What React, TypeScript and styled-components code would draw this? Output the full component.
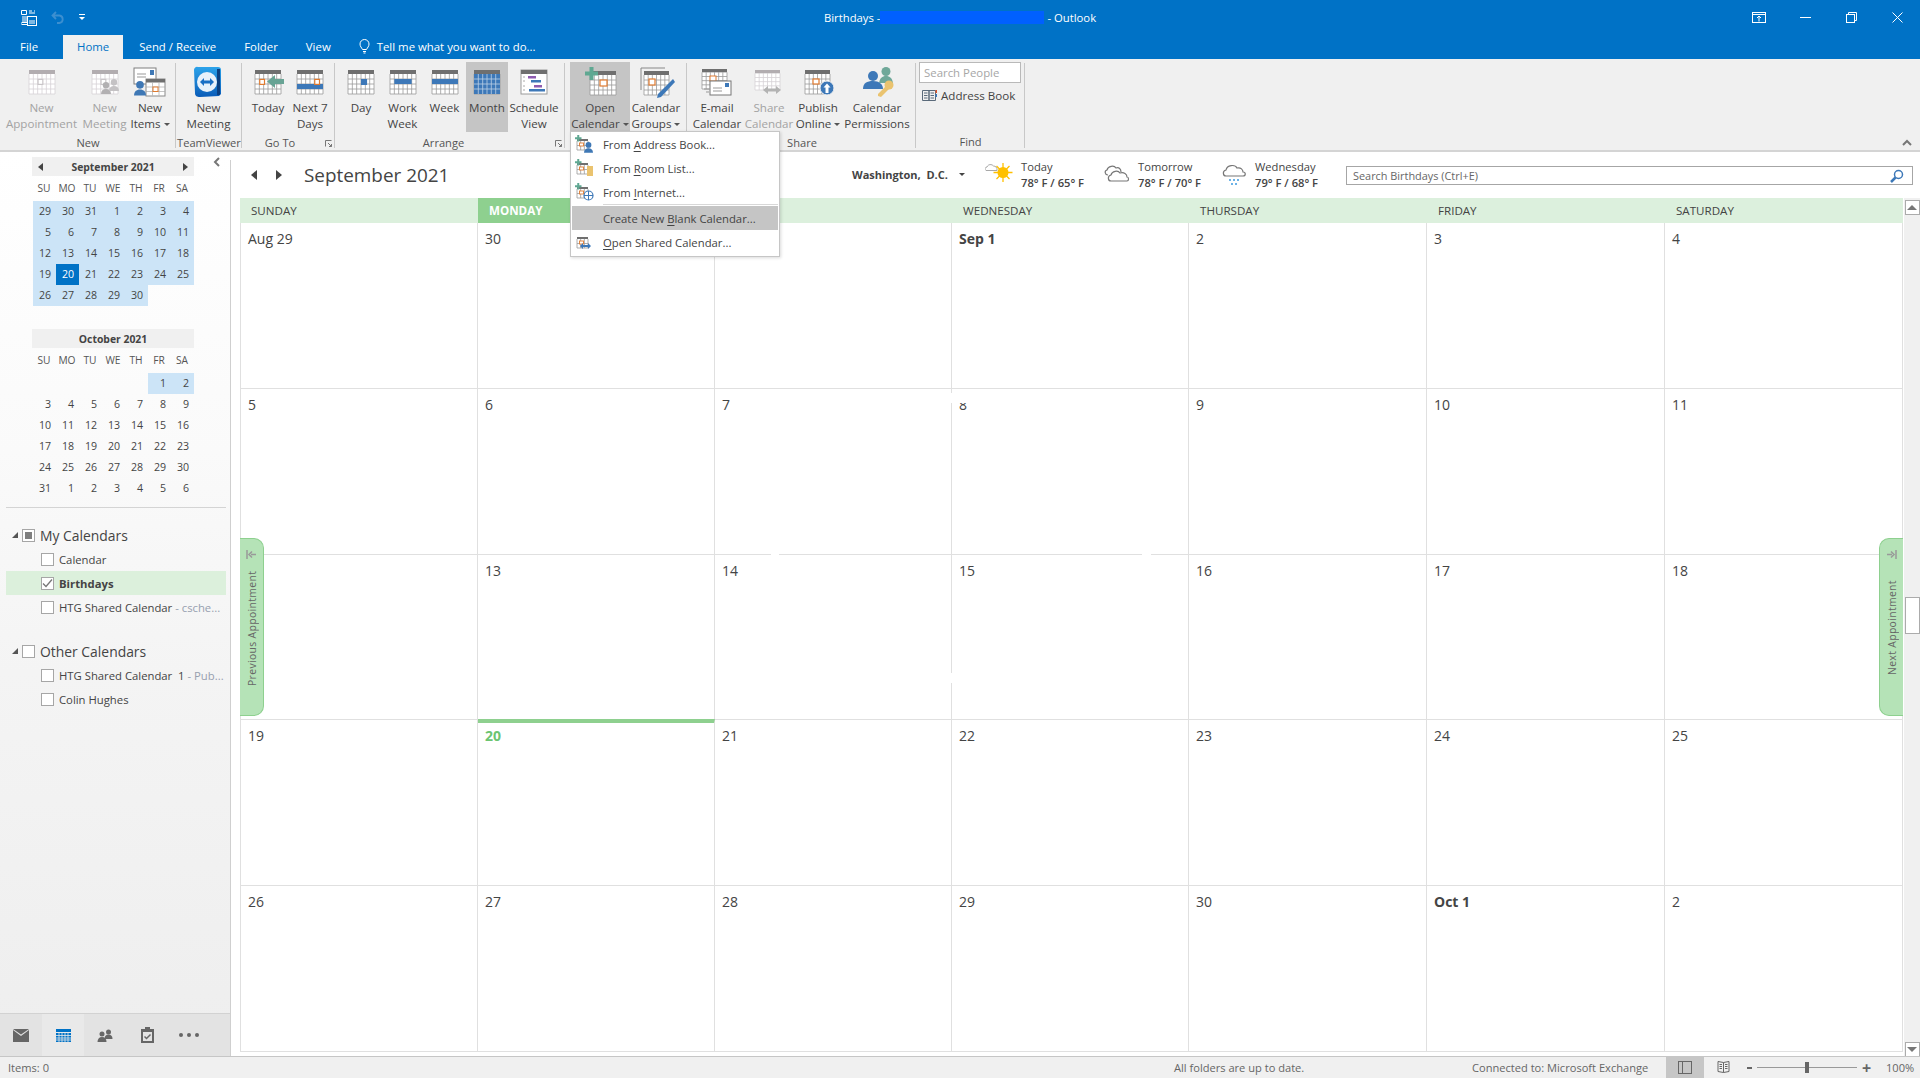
import React from 'react';
import styled, { createGlobalStyle } from 'styled-components';

const Global = createGlobalStyle`
  html, body { margin: 0; padding: 0; background: #fff; }
  * { box-sizing: border-box; }
  #root { font-family: "Open Sans", "Noto Sans", "Liberation Sans", sans-serif; color: #444; }
`;

const Page = styled.div`width:1920px;height:1078px;display:flex;flex-direction:column;overflow:hidden;background:#fff;`;

/* ---------- title bar ---------- */
const TitleBar = styled.div`height:35px;background:#0072c6;color:#fff;display:grid;grid-template-columns:1fr auto 1fr;align-items:center;padding-bottom:1px;`;
const Qat = styled.div`display:flex;align-items:center;padding-left:20px;gap:14px;`;
const TitleText = styled.div`font-size:11.3px;display:flex;align-items:center;gap:0;white-space:pre;`;
const Redact = styled.span`display:inline-block;width:164px;height:13px;background:#0060ff;`;
const WinButtons = styled.div`display:flex;justify-content:flex-end;`;
const WinBtn = styled.div`width:46px;height:30px;display:flex;align-items:center;justify-content:center;`;

/* ---------- tabs ---------- */
const TabRow = styled.div`height:24px;background:#0072c6;display:flex;padding-left:6px;align-items:stretch;`;
const Tab = styled.div<{ $active?: boolean; $file?: boolean }>`
  padding:0 14px 2px;font-size:11.4px;display:flex;align-items:center;margin-right:${p => (p.$file ? '11px' : p.$active ? '2px' : '0')};
  color:${p => (p.$active ? '#0072c6' : '#fff')};background:${p => (p.$active ? '#f0f0f0' : 'transparent')};
`;
const TellMe = styled.div`display:flex;align-items:center;gap:7px;color:#fff;font-size:11.4px;margin-left:14px;padding-bottom:2px;`;

/* ---------- ribbon ---------- */
const Ribbon = styled.div`height:93px;background:#f0f0f0;border-bottom:2px solid #d4d4d4;display:flex;padding-top:3px;position:relative;`;
const Group = styled.div<{ $w: number; $pl?: number }>`
  width:${p => p.$w}px;padding-left:${p => p.$pl ?? 0}px;position:relative;display:flex;flex-direction:column;flex:none;
  &::after{content:"";position:absolute;right:0;top:1px;height:85px;width:1px;background:#c8c8c8;}
`;
const Buttons = styled.div`display:flex;height:70px;`;
const RBtn = styled.div<{ $w: number; $on?: boolean; $off?: boolean }>`
  width:${p => p.$w}px;height:70px;flex:none;display:flex;flex-direction:column;align-items:center;padding-top:5px;position:relative;
  background:${p => (p.$on ? '#c5c5c5' : 'transparent')};color:${p => (p.$off ? '#a3a3a3' : '#444')};
`;
const IconBox = styled.svg`width:40px;height:30px;flex:none;overflow:visible;`;
const RLabel = styled.div`margin-top:3px;font-size:11.6px;line-height:16px;text-align:center;white-space:nowrap;`;
const Caret = styled.span`display:inline-block;margin-left:3px;vertical-align:middle;border-left:3px solid transparent;border-right:3px solid transparent;border-top:3px solid #555;`;
const Foot = styled.div<{ $launch?: boolean }>`height:16px;margin-top:3px;font-size:11.1px;line-height:16px;text-align:center;color:#555;padding-right:${p => (p.$launch ? '18px' : '0')};white-space:nowrap;`;
const Launcher = styled.svg`position:absolute;right:3px;bottom:3px;width:7px;height:7px;`;
const FindBody = styled.div`height:70px;padding-left:3px;display:flex;flex-direction:column;`;
const PeopleBox = styled.div`width:102px;height:21px;border:1px solid #b9b9b9;background:#fff;color:#a6a6a6;font-size:11.4px;line-height:19px;padding-left:4px;`;
const AddrRow = styled.div`display:flex;align-items:center;gap:4px;margin-top:3px;height:18px;padding-left:3px;font-size:11.6px;white-space:nowrap;`;
const Collapse = styled.svg`position:absolute;right:8px;bottom:4px;width:10px;height:7px;`;

/* ---------- dropdown ---------- */
const Menu = styled.div`position:absolute;left:0;top:69px;width:210px;height:126px;background:#fff;border:1px solid #c6c6c6;box-shadow:1px 1px 3px rgba(0,0,0,.15);padding:0 1px 1px;z-index:20;`;
const MItem = styled.div<{ $on?: boolean }>`height:24px;display:flex;align-items:center;padding-left:3px;gap:9px;font-size:11.3px;color:#444;white-space:nowrap;background:${p => (p.$on ? '#c5c5c5' : 'transparent')};`;
const MIconSlot = styled.svg`width:19px;height:18px;flex:none;`;
const MSep = styled.div`height:1px;margin:0 0 1px 31px;background:#d8d8d8;`;
const Mn = styled.span`text-decoration:underline;text-underline-offset:2px;`;

/* ---------- body ---------- */
const Body = styled.div`flex:1;display:flex;min-height:0;`;
const Sidebar = styled.div`
  width:231px;flex:none;display:flex;flex-direction:column;padding-top:5px;position:relative;background:linear-gradient(#fff 0,#fafafa 300px,#f4f4f4 520px,#eeeeee 100%);
  &::after{content:"";position:absolute;right:0;top:8px;bottom:0;width:1px;background:#cfcfcf;}
`;
const CollapseBtn = styled.svg`position:absolute;left:213px;top:5px;width:7px;height:10px;`;
const Mini = styled.div`margin-left:32px;width:162px;`;
const MiniHead = styled.div`height:19px;background:#f0f0f0;display:flex;align-items:center;justify-content:space-between;padding:0 6px;font-size:10.4px;font-weight:700;color:#444;`;
const MiniArrow = styled.span<{ $right?: boolean; $hide?: boolean }>`width:0;height:0;border-top:4px solid transparent;border-bottom:4px solid transparent;${p => (p.$right ? 'border-left:5px solid #444;' : 'border-right:5px solid #444;')}visibility:${p => (p.$hide ? 'hidden' : 'visible')};`;
const MiniGrid = styled.div`display:grid;grid-template-columns:repeat(7,23px);margin-left:1px;`;
const MiniDow = styled.div`height:25px;line-height:25px;text-align:center;font-size:10.2px;color:#555;padding-right:1px;`;
const MiniDay = styled.div<{ $sel?: boolean; $today?: boolean }>`
  height:21px;line-height:21px;text-align:right;padding-right:5px;font-size:10.6px;
  background:${p => (p.$today ? '#0072c6' : p.$sel ? '#cce4f7' : 'transparent')};color:${p => (p.$today ? '#fff' : '#444')};
`;
const MiniGap = styled.div`height:23px;`;
const SideRule = styled.div`height:1px;margin:8px 5px 15px 6px;background:#d4d4d4;flex:none;`;
const TreeHead = styled.div`height:24px;display:flex;align-items:center;padding-left:12px;font-size:13.9px;color:#444;`;
const Tri = styled.span`width:0;height:0;border-left:6px solid transparent;border-bottom:6px solid #555;margin-right:4px;`;
const Check = styled.span<{ $mark?: boolean }>`width:13px;height:13px;flex:none;border:1px solid #a6a6a6;background:#fff;display:flex;align-items:center;justify-content:center;margin-right:5px;`;
const CheckFill = styled.span`width:7px;height:7px;background:#7f7f7f;`;
const TreeRow = styled.div<{ $on?: boolean }>`height:24px;margin:0 5px 0 6px;padding-left:35px;display:flex;align-items:center;white-space:nowrap;font-size:11.3px;font-weight:${p => (p.$on ? 700 : 400)};background:${p => (p.$on ? '#dcf0dc' : 'transparent')};color:#444;`;
const Sub = styled.span`color:#97a0af;white-space:pre;`;
const TreeGap = styled.div`height:20px;`;
const Spacer = styled.div`flex:1;`;
const NavBar = styled.div`height:43px;border-top:1px solid #d2d2d2;background:#e3e3e3;display:flex;margin-right:1px;`;
const NavCell = styled.div<{ $on?: boolean }>`width:42px;display:flex;align-items:center;justify-content:center;background:${p => (p.$on ? '#e9e9e9' : 'transparent')};`;

/* ---------- calendar ---------- */
const Content = styled.div`flex:1;display:flex;flex-direction:column;min-width:0;`;
const CalHead = styled.div`height:46px;flex:none;display:flex;align-items:center;padding-left:20px;`;
const NavArrow = styled.span<{ $right?: boolean }>`width:0;height:0;margin-right:19px;border-top:5px solid transparent;border-bottom:5px solid transparent;${p => (p.$right ? 'border-left:6px solid #444;' : 'border-right:6px solid #444;')}`;
const MonthTitle = styled.div`flex:1;font-size:18.9px;color:#444;margin-left:3px;`;
const Location = styled.div`width:133px;font-size:11px;font-weight:700;color:#444;display:flex;align-items:center;gap:11px;white-space:pre;margin-bottom:2px;`;
const LocCaret = styled.span`border-left:3px solid transparent;border-right:3px solid transparent;border-top:3px solid #444;`;
const Weather = styled.div<{ $w: number }>`width:${p => p.$w}px;display:flex;align-items:center;flex:none;`;
const WxIcon = styled.svg<{ $w: number }>`width:${p => p.$w}px;height:30px;flex:none;`;
const WxText = styled.div`font-size:11.2px;line-height:16px;color:#444;white-space:nowrap;`;
const WxTemp = styled.div`font-weight:600;`;
const SearchBox = styled.div`width:567px;height:19px;margin:1px 7px 0 0;border:1px solid #a6a6a6;display:flex;align-items:center;justify-content:space-between;padding:0 8px 0 6px;font-size:10.9px;color:#666;flex:none;`;
const CalMain = styled.div`flex:1;display:flex;min-height:0;padding-left:9px;`;
const CalWrap = styled.div`width:1663px;height:854px;display:flex;flex-direction:column;position:relative;flex:none;`;
const DayHead = styled.div`height:25px;display:grid;grid-template-columns:238px 237px 237px 237px 238px 238px 238px;background:#dcf0dd;flex:none;`;
const DayName = styled.div<{ $on?: boolean }>`padding-left:11px;line-height:25px;font-size:11.6px;color:${p => (p.$on ? '#fff' : '#444')};font-weight:${p => (p.$on ? 700 : 400)};background:${p => (p.$on ? '#8ed08f' : 'transparent')};`;
const Grid = styled.div`flex:1;display:grid;grid-template-columns:237px 237px 237px 237px 238px 238px 238px;grid-template-rows:repeat(5,1fr);border-left:1px solid #e0e0e0;`;
const Cell = styled.div<{ $today?: boolean }>`border-right:1px solid #e0e0e0;border-bottom:1px solid #e0e0e0;padding:${p => (p.$today ? '1px' : '4px')} 0 0 7px;${p => (p.$today ? 'border-top:4px solid #8ed08f;margin-top:-1px;' : '')}`;
const CellDate = styled.span<{ $bold?: boolean; $today?: boolean }>`font-size:14px;line-height:18px;font-weight:${p => (p.$bold || p.$today ? 700 : 400)};color:${p => (p.$today ? '#6cc471' : '#444')};`;
const ApptTab = styled.div<{ $next?: boolean }>`
  position:absolute;top:340px;height:178px;width:24px;${p => (p.$next ? 'right:0;' : 'left:0;')}
  background:#b5e3b7;border:1px solid #8ed08f;border-${p => (p.$next ? 'right' : 'left')}:none;
  border-radius:${p => (p.$next ? '10px 0 0 10px' : '0 10px 10px 0')};display:flex;flex-direction:column;align-items:center;z-index:5;
`;
const ApptArrow = styled.svg`width:11px;height:9px;margin-top:11px;flex:none;`;
const ApptText = styled.div`flex:1;display:flex;align-items:center;justify-content:center;writing-mode:vertical-rl;transform:rotate(180deg);font-size:10.4px;letter-spacing:.35px;color:#666;white-space:nowrap;padding-top:18px;`;
const Erase = styled.div<{ $l: number; $t: number; $w: number; $h: number }>`position:absolute;left:${p => p.$l}px;top:${p => p.$t}px;width:${p => p.$w}px;height:${p => p.$h}px;background:#fff;z-index:3;`;
const ScrollBar = styled.div`width:16px;margin-left:1px;flex:none;height:859px;background:#f0f0f0;display:flex;flex-direction:column;align-items:center;padding-top:2px;`;
const ScrollBtn = styled.div`width:15px;height:15px;background:#fff;border:1px solid #ababab;display:flex;align-items:center;justify-content:center;flex:none;`;
const ScrollThumb = styled.div`width:15px;height:37px;background:#fff;border:1px solid #ababab;margin-top:382px;margin-bottom:auto;flex:none;`;
const ScrollTri = styled.span<{ $down?: boolean }>`border-left:5px solid transparent;border-right:5px solid transparent;${p => (p.$down ? 'border-top:5px solid #777;' : 'border-bottom:5px solid #777;')}`;

/* ---------- status ---------- */
const Status = styled.div`height:22px;flex:none;background:#f0f0f0;border-top:1px solid #c6c6c6;display:flex;align-items:stretch;font-size:11.1px;color:#666;position:relative;z-index:2;`;
const StatusText = styled.div<{ $pl?: number; $w?: number }>`padding-left:${p => p.$pl ?? 0}px;${p => (p.$w ? `width:${p.$w}px;` : '')}display:flex;align-items:center;white-space:nowrap;flex:none;`;
const ViewBtn = styled.div<{ $on?: boolean }>`width:38px;flex:none;display:flex;align-items:center;justify-content:center;background:${p => (p.$on ? '#c6c6c6' : 'transparent')};`;
const Zoom = styled.div`display:flex;align-items:center;margin-left:5px;width:139px;flex:none;`;
const ZoomMark = styled.span`width:5px;height:2px;background:#666;flex:none;`;
const ZoomTrack = styled.div`width:100px;height:1px;background:#999;margin:0 5px;position:relative;flex:none;`;
const ZoomThumb = styled.span`position:absolute;left:48px;top:-5px;width:4px;height:11px;background:#666;`;
const ZoomPlus = styled.span`font-size:16px;line-height:16px;color:#666;font-weight:700;`;

/* ---------- icon parts ---------- */
const CX = 7, CY = 3, CW = 26, CH = 24, CT = 4, COLS = 6, ROWS = 4;
const cw = CW / COLS, ch = (CH - CT) / ROWS;

function Cal({ x = CX, y = CY, w = CW, h = CH, head = '#6f6f6f', line = '#9a9a9a', cols = COLS, rows = ROWS }: { x?: number; y?: number; w?: number; h?: number; head?: string; line?: string; cols?: number; rows?: number }) {
  const t = Math.max(2, h / 6);
  const lines: React.ReactNode[] = [];
  for (let i = 0; i <= cols; i++) { const lx = x + (i * w) / cols; lines.push(<line key={'v' + i} x1={lx} x2={lx} y1={y + t} y2={y + h} stroke={line} strokeWidth=".8" />); }
  for (let j = 1; j <= rows; j++) { const ly = y + t + (j * (h - t)) / rows; lines.push(<line key={'h' + j} x1={x} x2={x + w} y1={ly} y2={ly} stroke={line} strokeWidth=".8" />); }
  return <g><rect x={x} y={y} width={w} height={h} fill="#fff" />{lines}<rect x={x} y={y} width={w} height={t} fill={head} /></g>;
}
const Fill = ({ c, r, n = 1, m = 1, f = '#3d78b8' }: { c: number; r: number; n?: number; m?: number; f?: string }) => <rect x={CX + c * cw} y={CY + CT + r * ch} width={n * cw} height={m * ch} fill={f} />;
const Orange = ({ c = 2, r = 1, s = '#e07b30' }: { c?: number; r?: number; s?: string }) => <rect x={CX + c * cw + .4} y={CY + CT + r * ch + .4} width={cw * 1.1} height={ch} fill="#fff" stroke={s} strokeWidth="1.2" />;
const Person = ({ x, y, s = 1, f = '#3f78b5' }: { x: number; y: number; s?: number; f?: string }) => <g transform={`translate(${x} ${y}) scale(${s})`} fill={f}><circle cx="5" cy="3.2" r="3.2" /><path d="M0 12c0-3.2 2-5 5-5s5 1.8 5 5z" /></g>;
const PlusG = ({ x = 0, y = 0, s = 1 }: { x?: number; y?: number; s?: number }) => <path transform={`translate(${x} ${y}) scale(${s})`} d="M4.5 0h4v4.5H13v4H8.5V13h-4V8.5H0v-4h4.5z" fill="#5fa892" />;

function RI({ name }: { name: string }) {
  const off = { head: '#b2adb0', line: '#d6d2d5' };
  let c: React.ReactNode = null;
  switch (name) {
    case 'appt': c = <><Cal {...off} /><Orange s="#c9c5c8" /></>; break;
    case 'meet': c = <><Cal {...off} /><Orange s="#c9c5c8" /><Person x={16} y={15} s={1} f="#b2b0b2" /><Person x={24} y={12} s={1} f="#c4c2c4" /></>; break;
    case 'items': c = <><rect x="4" y="1" width="22" height="16" fill="#fff" stroke="#7f7f7f" /><rect x="20" y="3" width="4" height="5" fill="#3f78b5" /><path d="M7 7h9M7 10h9" stroke="#999" /><rect x="16" y="12" width="19" height="17" fill="#fff" stroke="#8a8a8a" /><rect x="16" y="12" width="19" height="3.5" fill="#6f6f6f" /><path d="M22.5 15.5v13M29 15.5v13M16 20h19M16 24.500h19" stroke="#aaa" strokeWidth=".7" /><rect x="23" y="20" width="5" height="4.500" fill="#fff" stroke="#e07b30" /><Person x={4} y={14} s={1.2} /></>; break;
    case 'tv': c = <><defs><linearGradient id="tvg" x1="0" y1="0" x2="0" y2="1"><stop offset="0" stopColor="#2ca3ea" /><stop offset="1" stopColor="#0a5cb8" /></linearGradient></defs><path d="M9 0h20a3 3 0 0 1 3 3v24l-2 2-19 1c-3 0-5-1-5-4l-1-23a3 3 0 0 1 4-3z" fill="url(#tvg)" /><rect x="28" y="2" width="3" height="26" fill="#0b3f80" /><circle cx="18" cy="15" r="10" fill="#e8f1fa" /><path d="M11 15l4-4v2.500h6V11l4 4-4 4v-2.500h-6V19z" fill="#1a6fc4" /></>; break;
    case 'today': c = <><Cal /><Orange c={1} r={1} /><path d="M36 12h-9V8l-8 6.500 8 6.500v-4h9z" fill="#68a394" /></>; break;
    case 'next': c = <><Cal /><Fill c={0} r={2} n={6} /><Orange c={4} r={1} /></>; break;
    case 'day': c = <><Cal /><Fill c={3} r={1} n={1.4} m={1.2} /></>; break;
    case 'work': c = <><Cal /><Fill c={1} r={1} n={4} /></>; break;
    case 'week': c = <><Cal /><Fill c={0} r={1} n={6} /></>; break;
    case 'month': c = <><Cal /><Fill c={0} r={0} n={6} m={4} f="#3d78b8" /><path d="M11.300 7v20M15.700 7v20M20 7v20M24.300 7v20M28.700 7v20M7 12h26M7 17h26M7 22h26" stroke="#bcd0e6" strokeWidth=".8" /></>; break;
    case 'sched': c = <><rect x="7" y="3" width="26" height="24" fill="#fff" stroke="#9a9a9a" /><rect x="7" y="3" width="26" height="4" fill="#6f6f6f" /><rect x="14" y="9" width="8" height="2.500" fill="#8e5bb0" /><rect x="17" y="13" width="10" height="2.500" fill="#3d78b8" /><rect x="20" y="18" width="8" height="2.500" fill="#8e5bb0" /><rect x="15" y="22" width="16" height="2.500" fill="#3d78b8" /><path d="M9 10h2M9 14h2M9 19h2M9 23h2" stroke="#aaa" /></>; break;
    case 'open': c = <><Cal x={10} y={4} w={26} h={24} /><rect x={20} y={13} width={7} height={6} fill="#fff" stroke="#e07b30" strokeWidth="1.2" /><PlusG x={5} y={0} /></>; break;
    case 'groups': c = <><path d="M5 1h24" stroke="#888" /><path d="M5 1v22" stroke="#888" /><Cal x={8} y={4} w={25} h={24} /><rect x={13} y={12} width={6} height={6} fill="#fff" stroke="#e07b30" strokeWidth="1.2" /><path d="M37 12l2 3-14 15-4 1 1-4z" fill="#3d78b8" /></>; break;
    case 'mail': c = <><Cal x={5} y={2} w={25} h={20} /><rect x={13} y={9} width={6} height={5} fill="#fff" stroke="#e07b30" /><rect x="13" y="14" width="21" height="14" fill="#fff" stroke="#777" /><rect x="28" y="16" width="4" height="4" fill="#3d78b8" /><path d="M16 21h9M16 24h9" stroke="#999" /><path d="M7 22h5M9 25h3" stroke="#999" /></>; break;
    case 'share': c = <><Cal {...off} x={6} y={3} h={20} w={25} /><path d="M14 23l5-4v2.500h8V19l5 4-5 4v-2.500h-8V27z" fill="#b3b3b3" /></>; break;
    case 'pub': c = <><Cal x={7} y={3} w={25} h={24} /><rect x={15} y={12} width={6} height={5} fill="#fff" stroke="#e07b30" strokeWidth="1.2" /><circle cx="29" cy="21" r="7" fill="#3d78b8" stroke="#f0f0f0" /><path d="M29 16.500l3.500 4h-2V26h-3v-5.500h-2z" fill="#fff" /></>; break;
    case 'perm': c = <><circle cx="29" cy="4.500" r="4.500" fill="#6fa899" /><path d="M22 16c1-5 3-7 7-7s6 2 7 7z" fill="#6fa899" /><circle cx="16" cy="9" r="5" fill="#3d78b8" /><path d="M6 22c0-6 4-8 10-8s10 3 10 8z" fill="#3d78b8" /><g fill="#eac36f"><circle cx="32" cy="18" r="4.500" /><path d="M29 19l3 3-8 8-3-1v-2z" /></g></>; break;
  }
  return <IconBox viewBox="0 0 40 30">{c}</IconBox>;
}

function MI({ name }: { name: string }) {
  const small = <><Cal x={2} y={4} w={11} h={11} cols={3} rows={2} head="#6f6f6f" /><rect x="4.500" y="8" width="4" height="3" fill="#fff" stroke="#e07b30" strokeWidth=".9" /></>;
  let o: React.ReactNode = null;
  if (name === 'addr') o = <><PlusG x={0} y={0} s={.5} /><Person x={9} y={7} s={.9} /></>;
  if (name === 'room') o = <><PlusG x={0} y={0} s={.5} /><rect x="12" y="7" width="6" height="10" fill="#eac36f" /></>;
  if (name === 'net') o = <><PlusG x={0} y={0} s={.5} /><circle cx="13.500" cy="12.500" r="4.500" fill="#fff" stroke="#3d78b8" strokeWidth="1.200" /><path d="M9 12.500h9M13.500 8v9" stroke="#3d78b8" /></>;
  if (name === 'shared') o = <path d="M5 13l3-3v2h5v-2l3 3-3 3v-2H8v2z" fill="#3d78b8" />;
  return <MIconSlot viewBox="0 0 19 18">{name === 'blank' ? null : small}{o}</MIconSlot>;
}

const Launch = () => <Launcher viewBox="0 0 7 7"><path d="M.5 6.500V.5h6M3 3l3.500 3.500M6.500 4v2.500H4" fill="none" stroke="#777" /></Launcher>;

const SunCloud = () => <WxIcon $w={36} viewBox="0 0 36 30"><g stroke="#ffc000" strokeWidth="1.300"><path d="M18 3v19M8.500 12.500h19M11.500 6l13 13M24.500 6l-13 13" /></g><circle cx="18" cy="12.500" r="5.500" fill="#ffc000" /><path d="M1 10.500c-1.500-1-1-3.500 1-3.500 1-3 5-3 6.500-1 2 0 4 1.500 3.500 4.500z" fill="#fff" stroke="#a8a8a8" /></WxIcon>;
const Clouds = () => <WxIcon $w={35} viewBox="0 0 35 30"><path d="M5 15c-3 0-4-4-1-5 1-4 7-5 9-2 3-1 5 1 5 4" fill="#fff" stroke="#777" strokeWidth="1.200" /><path d="M8 21c-3 0-4-5 0-6 1-4 7-5 9-2 4-1 7 1 7 4 2 0 2 4 0 4z" fill="#fff" stroke="#777" strokeWidth="1.200" /></WxIcon>;
const Rain = () => <WxIcon $w={33} viewBox="0 0 33 30"><path d="M4 16c-3 0-4-5 0-6 1-5 9-6 11-2 4-1 6 2 6 4 3 0 3 4 0 4z" fill="#fff" stroke="#777" strokeWidth="1.200" /><path d="M8 19v2M12 19v2M16 19v2M10 23v2M14 23v2" stroke="#3d9be0" strokeWidth="1.500" /></WxIcon>;

/* ---------- data ---------- */
const DOW = ['SU', 'MO', 'TU', 'WE', 'TH', 'FR', 'SA'];
const SEP = ['29', '30', '31', '1', '2', '3', '4', '5', '6', '7', '8', '9', '10', '11', '12', '13', '14', '15', '16', '17', '18', '19', '20', '21', '22', '23', '24', '25', '26', '27', '28', '29', '30'];
const OCT = ['', '', '', '', '', '1', '2', '3', '4', '5', '6', '7', '8', '9', '10', '11', '12', '13', '14', '15', '16', '17', '18', '19', '20', '21', '22', '23', '24', '25', '26', '27', '28', '29', '30', '31', '1', '2', '3', '4', '5', '6'];
const DAYS = ['SUNDAY', 'MONDAY', 'TUESDAY', 'WEDNESDAY', 'THURSDAY', 'FRIDAY', 'SATURDAY'];
const CELLS = ['Aug 29', '30', '31', 'Sep 1', '2', '3', '4', '5', '6', '7', '8', '9', '10', '11', '12', '13', '14', '15', '16', '17', '18', '19', '20', '21', '22', '23', '24', '25', '26', '27', '28', '29', '30', 'Oct 1', '2'];

export default function App() {
  return (
    <Page>
      <Global />
      <TitleBar>
        <Qat>
          <svg width="17" height="17" viewBox="0 0 17 17" fill="none" stroke="#fff"><path d="M1.500 1.500h5v4h-5zM2 8h5M2 10h5M2 12h5M9 2h3M9 4h6M14 2h1" /><rect x="7.500" y="7.500" width="9" height="9" /><path d="M9 12h6M9 14h6" /><rect x="2" y="13.500" width="5" height="2" /></svg>
          <svg width="14" height="13" viewBox="0 0 14 13" fill="none" stroke="#3c8fd0" strokeWidth="1.800"><path d="M5 1L1.500 4.500 5 8M2 4.500h6.500a3.800 3.800 0 0 1 0 7.500H6" /></svg>
          <svg width="6" height="6" viewBox="0 0 6 6" fill="#fff"><rect width="6" height="1" /><path d="M0 3h6L3 6z" /></svg>
        </Qat>
        <TitleText>Birthdays -<Redact /> - Outlook</TitleText>
        <WinButtons>
          <WinBtn><svg width="14" height="11" viewBox="0 0 14 11" fill="none" stroke="#fff"><rect x=".5" y=".5" width="13" height="10" /><path d="M1 2.500h12M7 9.500V4M5 6l2-2 2 2" /></svg></WinBtn>
          <WinBtn><svg width="11" height="1" viewBox="0 0 11 1"><rect width="11" height="1" fill="#fff" /></svg></WinBtn>
          <WinBtn><svg width="11" height="11" viewBox="0 0 11 11" fill="none" stroke="#fff"><rect x=".5" y="2.500" width="8" height="8" /><path d="M2.500 2.500v-2h8v8h-2" /></svg></WinBtn>
          <WinBtn><svg width="11" height="11" viewBox="0 0 11 11" stroke="#fff"><path d="M.5.500l10 10M10.500.500l-10 10" /></svg></WinBtn>
        </WinButtons>
      </TitleBar>
      <TabRow>
        <Tab $file>File</Tab>
        <Tab $active>Home</Tab>
        <Tab>Send / Receive</Tab>
        <Tab>Folder</Tab>
        <Tab>View</Tab>
        <TellMe>
          <svg width="11" height="15" viewBox="0 0 11 15" fill="none" stroke="#fff"><path d="M3.500 10.500C2.500 8.500 1 7.500 1 5a4.500 4.500 0 0 1 9 0c0 2.500-1.500 3.500-2.500 5.500zM4 12.500h3M4.500 14h2" /></svg>
          Tell me what you want to do...
        </TellMe>
      </TabRow>
      <Ribbon>
        <Group $w={176}>
          <Buttons>
            <RBtn $w={83} $off><RI name="appt" /><RLabel>New<br />Appointment</RLabel></RBtn>
            <RBtn $w={43} $off><RI name="meet" /><RLabel>New<br />Meeting</RLabel></RBtn>
            <RBtn $w={48}><RI name="items" /><RLabel>New<br />Items<Caret /></RLabel></RBtn>
          </Buttons>
          <Foot>New</Foot>
        </Group>
        <Group $w={66}>
          <Buttons><RBtn $w={65}><RI name="tv" /><RLabel>New<br />Meeting</RLabel></RBtn></Buttons>
          <Foot>TeamViewer</Foot>
        </Group>
        <Group $w={93} $pl={1}>
          <Buttons>
            <RBtn $w={50}><RI name="today" /><RLabel>Today</RLabel></RBtn>
            <RBtn $w={34}><RI name="next" /><RLabel>Next 7<br />Days</RLabel></RBtn>
          </Buttons>
          <Foot $launch>Go To</Foot>
          <Launch />
        </Group>
        <Group $w={230} $pl={5}>
          <Buttons>
            <RBtn $w={42}><RI name="day" /><RLabel>Day</RLabel></RBtn>
            <RBtn $w={41}><RI name="work" /><RLabel>Work<br />Week</RLabel></RBtn>
            <RBtn $w={43}><RI name="week" /><RLabel>Week</RLabel></RBtn>
            <RBtn $w={42} $on><RI name="month" /><RLabel>Month</RLabel></RBtn>
            <RBtn $w={52}><RI name="sched" /><RLabel>Schedule<br />View</RLabel></RBtn>
          </Buttons>
          <Foot $launch>Arrange</Foot>
          <Launch />
        </Group>
        <Group $w={122} $pl={5}>
          <Buttons>
            <RBtn $w={60} $on>
              <RI name="open" /><RLabel>Open<br />Calendar<Caret /></RLabel>
              <Menu>
                <MItem><MI name="addr" /><span>From <Mn>A</Mn>ddress Book...</span></MItem>
                <MItem><MI name="room" /><span>From <Mn>R</Mn>oom List...</span></MItem>
                <MItem><MI name="net" /><span>From <Mn>I</Mn>nternet...</span></MItem>
                <MSep />
                <MItem $on><MI name="blank" /><span>Create New <Mn>B</Mn>lank Calendar...</span></MItem>
                <MItem><MI name="shared" /><span><Mn>O</Mn>pen Shared Calendar...</span></MItem>
              </Menu>
            </RBtn>
            <RBtn $w={52}><RI name="groups" /><RLabel>Calendar<br />Groups<Caret /></RLabel></RBtn>
          </Buttons>
        </Group>
        <Group $w={229} $pl={1}>
          <Buttons>
            <RBtn $w={58}><RI name="mail" /><RLabel>E-mail<br />Calendar</RLabel></RBtn>
            <RBtn $w={46} $off><RI name="share" /><RLabel>Share<br />Calendar</RLabel></RBtn>
            <RBtn $w={52}><RI name="pub" /><RLabel>Publish<br />Online<Caret /></RLabel></RBtn>
            <RBtn $w={66}><RI name="perm" /><RLabel>Calendar<br />Permissions</RLabel></RBtn>
          </Buttons>
          <Foot>Share</Foot>
        </Group>
        <Group $w={109}>
          <FindBody>
            <PeopleBox>Search People</PeopleBox>
            <AddrRow>
              <svg width="15" height="13" viewBox="0 0 15 13" fill="none" stroke="#5a6a7a"><path d="M.5 1.500h6.500v10H.5zM7 1.500h6.500v10H7zM2 4h3.500M2 6.500h3.500M2 9h3.500M8.500 4H12M8.500 6.500H12M8.500 9H12" /><rect x="13.500" y="1" width="1.500" height="3" fill="#d9542c" stroke="none" /><rect x="13.500" y="5" width="1.500" height="3" fill="#3d78b8" stroke="none" /></svg>
              Address Book
            </AddrRow>
          </FindBody>
          <Foot>Find</Foot>
        </Group>
        <Collapse viewBox="0 0 10 7"><path d="M1 6l4-4 4 4" fill="none" stroke="#777" strokeWidth="2" /></Collapse>
      </Ribbon>
      <Body>
        <Sidebar>
          <CollapseBtn viewBox="0 0 7 10"><path d="M6 1L2 5l4 4" fill="none" stroke="#777" strokeWidth="2" /></CollapseBtn>
          <Mini>
            <MiniHead><MiniArrow />September 2021<MiniArrow $right /></MiniHead>
            <MiniGrid>
              {DOW.map(d => <MiniDow key={d}>{d}</MiniDow>)}
              {SEP.map((d, i) => <MiniDay key={i} $sel $today={i === 22}>{d}</MiniDay>)}
            </MiniGrid>
          </Mini>
          <MiniGap />
          <Mini>
            <MiniHead><MiniArrow $hide />October 2021<MiniArrow $right $hide /></MiniHead>
            <MiniGrid>
              {DOW.map(d => <MiniDow key={d}>{d}</MiniDow>)}
              {OCT.map((d, i) => <MiniDay key={i} $sel={i === 5 || i === 6}>{d}</MiniDay>)}
            </MiniGrid>
          </Mini>
          <SideRule />
          <TreeHead><Tri /><Check><CheckFill /></Check>My Calendars</TreeHead>
          <TreeRow><Check />Calendar</TreeRow>
          <TreeRow $on><Check><svg width="11" height="10" viewBox="0 0 11 10"><path d="M1 5.500l3 3 6-7" fill="none" stroke="#777" strokeWidth="1.300" /></svg></Check>Birthdays</TreeRow>
          <TreeRow><Check />HTG Shared Calendar<Sub> - csche...</Sub></TreeRow>
          <TreeGap />
          <TreeHead><Tri /><Check />Other Calendars</TreeHead>
          <TreeRow><Check />HTG Shared Calendar&nbsp; 1<Sub> - Pub...</Sub></TreeRow>
          <TreeRow><Check />Colin Hughes</TreeRow>
          <Spacer />
          <NavBar>
            <NavCell><svg width="16" height="13" viewBox="0 0 16 13"><path d="M0 1l8 6 8-6v12H0z" fill="#666" /><path d="M0 0h16L8 5.500z" fill="#666" /></svg></NavCell>
            <NavCell $on><svg width="15" height="13" viewBox="0 0 15 13"><rect width="15" height="3" fill="#0072c6" /><path d="M0 4h15v9H0z" fill="#0072c6" /><path d="M3 4v9M6 4v9M9 4v9M12 4v9M0 6.500h15M0 9h15M0 11h15" stroke="#e9e9e9" strokeWidth=".8" /></svg></NavCell>
            <NavCell><svg width="16" height="13" viewBox="0 0 16 13" fill="#666"><circle cx="11.500" cy="3" r="2.500" /><path d="M7.500 10c0-3 1.500-4.500 4-4.500s4 1.500 4 4.500z" /><circle cx="5" cy="5" r="2.500" /><path d="M.5 13c0-3 1.500-5 4.500-5s4.500 2 4.500 5z" /></svg></NavCell>
            <NavCell><svg width="13" height="16" viewBox="0 0 13 16"><path d="M0 2h4V0h5v2h4v14H0z" fill="#666" /><path d="M2 5h9v9H2z" fill="#e3e3e3" /><path d="M3.500 9.500l2 2 4-4" fill="none" stroke="#666" strokeWidth="1.500" /></svg></NavCell>
            <NavCell><svg width="20" height="4" viewBox="0 0 20 4" fill="#666"><circle cx="2" cy="2" r="2" /><circle cx="10" cy="2" r="2" /><circle cx="18" cy="2" r="2" /></svg></NavCell>
          </NavBar>
        </Sidebar>
        <Content>
          <CalHead>
            <NavArrow />
            <NavArrow $right />
            <MonthTitle>September 2021</MonthTitle>
            <Location>Washington,  D.C.<LocCaret /></Location>
            <Weather $w={118}><SunCloud /><WxText>Today<WxTemp>78° F / 65° F</WxTemp></WxText></Weather>
            <Weather $w={119}><Clouds /><WxText>Tomorrow<WxTemp>78° F / 70° F</WxTemp></WxText></Weather>
            <Weather $w={124}><Rain /><WxText>Wednesday<WxTemp>79° F / 68° F</WxTemp></WxText></Weather>
            <SearchBox>Search Birthdays (Ctrl+E)
              <svg width="14" height="14" viewBox="0 0 14 14" fill="none" stroke="#3d78b8" strokeWidth="1.500"><circle cx="8.500" cy="5.500" r="4" /><path d="M5.500 8.500L1 13" strokeWidth="2.500" /></svg>
            </SearchBox>
          </CalHead>
          <CalMain>
            <CalWrap>
              <DayHead>{DAYS.map(d => <DayName key={d} $on={d === 'MONDAY'}>{d}</DayName>)}</DayHead>
              <Grid>
                {CELLS.map((d, i) => (
                  <Cell key={i} $today={i === 22}>
                    <CellDate $bold={d === 'Sep 1' || d === 'Oct 1'} $today={i === 22}>{d}</CellDate>
                  </Cell>
                ))}
              </Grid>
              <Erase $l={711} $t={195} $w={35} $h={10} />
              <Erase $l={711} $t={475} $w={2} $h={10} />
              <Erase $l={531} $t={355} $w={8} $h={2} />
              <Erase $l={902} $t={355} $w={9} $h={2} />
              <ApptTab>
                <ApptArrow viewBox="0 0 11 9"><path d="M1 0v9M10 4.500H5M6 1.500l-3 3 3 3" fill="none" stroke="#999" strokeWidth="1.500" /></ApptArrow>
                <ApptText>Previous Appointment</ApptText>
              </ApptTab>
              <ApptTab $next>
                <ApptArrow viewBox="0 0 11 9"><path d="M10 0v9M1 4.500h5M5 1.500l3 3-3 3" fill="none" stroke="#999" strokeWidth="1.500" /></ApptArrow>
                <ApptText>Next Appointment</ApptText>
              </ApptTab>
            </CalWrap>
            <ScrollBar>
              <ScrollBtn><ScrollTri /></ScrollBtn>
              <ScrollThumb />
              <ScrollBtn><ScrollTri $down /></ScrollBtn>
            </ScrollBar>
          </CalMain>
        </Content>
      </Body>
      <Status>
        <StatusText $pl={8} $w={1174}>Items: 0</StatusText>
        <StatusText $w={298}>All folders are up to date.</StatusText>
        <StatusText $w={194}>Connected to: Microsoft Exchange</StatusText>
        <ViewBtn $on><svg width="14" height="13" viewBox="0 0 14 13" fill="none" stroke="#666"><rect x=".5" y=".5" width="13" height="12" /><path d="M4.500 0v13" /></svg></ViewBtn>
        <ViewBtn><svg width="13" height="13" viewBox="0 0 13 13" fill="none" stroke="#666"><path d="M6.500 1.500L1 .5v10l5.500 1 5.500-1V.5zM6.500 1.500v10M2.500 3.500h2.500M2.500 5.500h2.500M2.500 7.500h2.500M8 3.500h2.500M8 5.500h2.500M8 7.500h2.500" /></svg></ViewBtn>
        <Zoom>
          <ZoomMark />
          <ZoomTrack><ZoomThumb /></ZoomTrack>
          <ZoomPlus>+</ZoomPlus>
        </Zoom>
        <StatusText>100%</StatusText>
      </Status>
    </Page>
  );
}
